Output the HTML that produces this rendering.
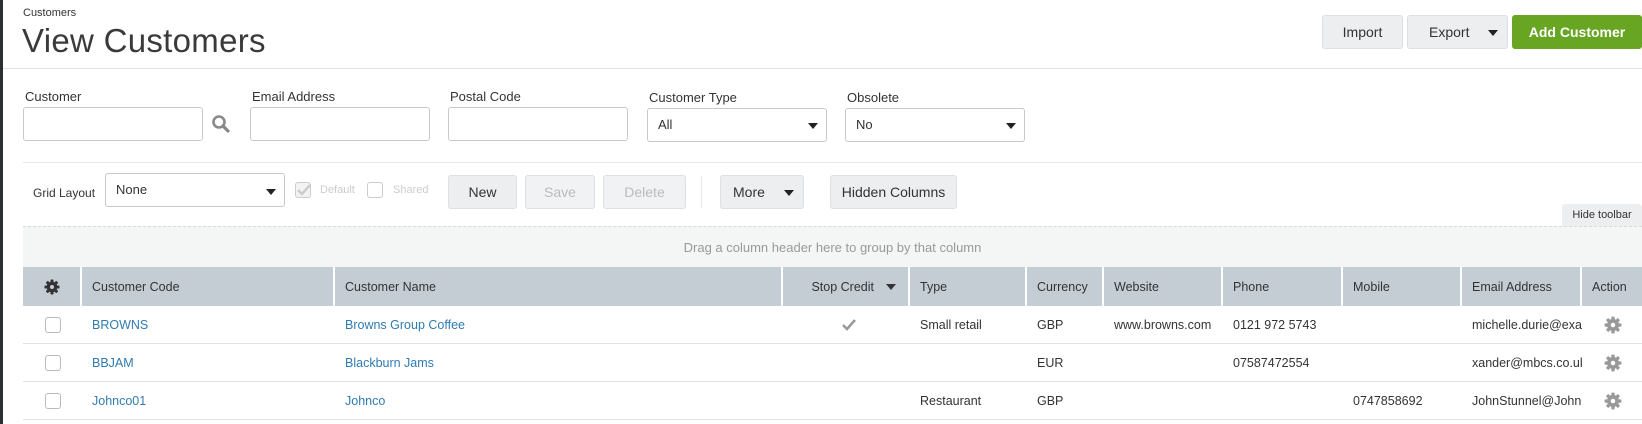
<!DOCTYPE html>
<html><head><style>
*{box-sizing:border-box;margin:0;padding:0}
body{width:1642px;height:424px;overflow:hidden;background:#fff;font-family:"Liberation Sans",sans-serif;color:#333;position:relative;font-size:13px}
.a{position:absolute}
.inp{position:absolute;border:1px solid #c8c8c8;border-radius:3px;background:#fff;height:34px}
.lbl{position:absolute;font-size:13px;color:#333}
.btn{position:absolute;background:#eceef0;border:1px solid #dde0e3;border-radius:3px;height:34px;display:flex;align-items:center;justify-content:center;font-size:14px;color:#333}
.dis{color:#bbb;background:#f1f2f3}
.car{width:0;height:0;border-left:5px solid transparent;border-right:5px solid transparent;border-top:6px solid #222;position:absolute}
.th{position:absolute;top:267px;height:39px;background:#c5cdd4;display:flex;align-items:center;padding-left:10px;font-size:12.5px;color:#333;border-right:2px solid #fff}
.td{position:absolute;height:38px;display:flex;align-items:center;padding-left:10px;font-size:12.5px;white-space:nowrap;overflow:hidden}
.lk{color:#2f7bb0}
.rl{position:absolute;left:23px;width:1619px;height:1px;background:#e2e2e2}
.cb{position:absolute;width:16px;height:16px;border:1px solid #bbb;border-radius:3px;background:#fff}
</style></head><body>
<div class="a" style="left:0;top:0;width:3px;height:424px;background:#2b3034"></div>
<div class="a" style="left:23px;top:7px;font-size:11px">Customers</div>
<div class="a" style="left:22px;top:22px;font-size:33px;color:#3a3a3a;letter-spacing:0.3px">View Customers</div>
<div class="btn" style="left:1322px;top:15px;width:81px">Import</div>
<div class="btn" style="left:1407px;top:15px;width:101px;justify-content:flex-start;padding-left:21px">Export<span class="car" style="left:80px;top:14px"></span></div>
<div class="btn" style="left:1512px;top:15px;width:130px;background:#67a523;border-color:#67a523;color:#fff;font-weight:bold">Add Customer</div>
<div class="a" style="left:3px;top:68px;width:1639px;height:1px;background:#dfe3e6"></div>

<div class="lbl" style="left:25px;top:89px">Customer</div>
<div class="inp" style="left:23px;top:107px;width:180px"></div>
<svg class="a" style="left:211px;top:114px" width="20" height="20" viewBox="0 0 20 20"><circle cx="8" cy="8" r="5.5" fill="none" stroke="#888" stroke-width="2.6"/><path d="M12 12l5 5" stroke="#888" stroke-width="3.2" stroke-linecap="round"/></svg>
<div class="lbl" style="left:252px;top:89px">Email Address</div>
<div class="inp" style="left:250px;top:107px;width:180px"></div>
<div class="lbl" style="left:450px;top:89px">Postal Code</div>
<div class="inp" style="left:448px;top:107px;width:180px"></div>
<div class="lbl" style="left:649px;top:90px">Customer Type</div>
<div class="inp" style="left:647px;top:108px;width:180px;padding:8px 10px;font-size:13px">All<span class="car" style="left:160px;top:14px"></span></div>
<div class="lbl" style="left:847px;top:90px">Obsolete</div>
<div class="inp" style="left:845px;top:108px;width:180px;padding:8px 10px;font-size:13px">No<span class="car" style="left:160px;top:14px"></span></div>
<div class="a" style="left:23px;top:162px;width:1619px;height:1px;background:#e8e8e8"></div>

<div class="lbl" style="left:33px;top:186px;font-size:12px">Grid Layout</div>
<div class="inp" style="left:105px;top:173px;width:180px;padding:8px 10px;font-size:13px">None<span class="car" style="left:160px;top:15px"></span></div>
<div class="cb" style="left:295px;top:182px;border-color:#ccc;background:#f3f3f3"></div>
<svg class="a" style="left:297px;top:184px" width="14" height="12"><path d="M1 6l4 4 8-9" fill="none" stroke="#ccc" stroke-width="2.5"/></svg>
<div class="lbl" style="left:320px;top:184px;font-size:11px;color:#ccc">Default</div>
<div class="cb" style="left:367px;top:182px;border-color:#ccc"></div>
<div class="lbl" style="left:393px;top:184px;font-size:11px;color:#ccc">Shared</div>
<div class="btn" style="left:448px;top:175px;width:69px">New</div>
<div class="btn dis" style="left:525px;top:175px;width:70px">Save</div>
<div class="btn dis" style="left:603px;top:175px;width:83px">Delete</div>
<div class="a" style="left:701px;top:176px;width:1px;height:32px;background:#e6e6e6"></div>
<div class="btn" style="left:720px;top:175px;width:84px;justify-content:flex-start;padding-left:12px">More<span class="car" style="left:63px;top:14px"></span></div>
<div class="btn" style="left:830px;top:175px;width:127px">Hidden Columns</div>
<div class="a" style="left:1562px;top:204px;width:80px;height:22px;background:#eceef0;border-radius:3px 3px 0 0;font-size:11px;display:flex;align-items:center;justify-content:center">Hide toolbar</div>

<div class="a" style="left:23px;top:226px;width:1619px;height:41px;background:#f4f5f5;border-top:1px dashed #d6dadd;display:flex;align-items:center;justify-content:center;color:#999;font-size:13px">Drag a column header here to group by that column</div>

<div class="th" style="left:23px;width:59px;justify-content:center;padding:0"><svg width="16" height="16" viewBox="0 0 16 16"><g fill="#333"><circle cx="8" cy="8" r="5.3"/><rect x="6.5" y="0.5" width="3" height="15" rx="0.8"/><rect x="0.5" y="6.5" width="15" height="3" rx="0.8"/><rect x="6.5" y="0.5" width="3" height="15" rx="0.8" transform="rotate(45 8 8)"/><rect x="6.5" y="0.5" width="3" height="15" rx="0.8" transform="rotate(-45 8 8)"/></g><circle cx="8" cy="8" r="2" fill="#c5cdd4"/></svg></div>
<div class="th" style="left:82px;width:253px">Customer Code</div>
<div class="th" style="left:335px;width:448px">Customer Name</div>
<div class="th" style="left:783px;width:127px;justify-content:flex-end;padding-right:12px">Stop Credit<span class="car" style="position:static;margin-left:12px;border-top-color:#333"></span></div>
<div class="th" style="left:910px;width:117px">Type</div>
<div class="th" style="left:1027px;width:77px">Currency</div>
<div class="th" style="left:1104px;width:119px">Website</div>
<div class="th" style="left:1223px;width:120px">Phone</div>
<div class="th" style="left:1343px;width:119px">Mobile</div>
<div class="th" style="left:1462px;width:120px">Email Address</div>
<div class="th" style="left:1582px;width:60px;border-right:0">Action</div>

<div class="cb" style="left:45px;top:317px"></div>
<div class="td lk" style="left:82px;top:306px">BROWNS</div>
<div class="td lk" style="left:335px;top:306px">Browns Group Coffee</div>
<svg class="a" style="left:842px;top:319px" width="14" height="12"><path d="M1 6l4 4 8-9" fill="none" stroke="#999" stroke-width="2.5"/></svg>
<div class="td" style="left:910px;top:306px">Small retail</div>
<div class="td" style="left:1027px;top:306px">GBP</div>
<div class="td" style="left:1104px;top:306px">www.browns.com</div>
<div class="td" style="left:1223px;top:306px">0121 972 5743</div>
<div class="td" style="left:1462px;top:306px;width:120px">michelle.durie@example.com</div>
<div class="rl" style="top:343px"></div>

<div class="cb" style="left:45px;top:355px"></div>
<div class="td lk" style="left:82px;top:344px">BBJAM</div>
<div class="td lk" style="left:335px;top:344px">Blackburn Jams</div>
<div class="td" style="left:1027px;top:344px">EUR</div>
<div class="td" style="left:1223px;top:344px">07587472554</div>
<div class="td" style="left:1462px;top:344px;width:120px">xander@mbcs.co.uk</div>
<div class="rl" style="top:381px"></div>

<div class="cb" style="left:45px;top:393px"></div>
<div class="td lk" style="left:82px;top:382px">Johnco01</div>
<div class="td lk" style="left:335px;top:382px">Johnco</div>
<div class="td" style="left:910px;top:382px">Restaurant</div>
<div class="td" style="left:1027px;top:382px">GBP</div>
<div class="td" style="left:1343px;top:382px">0747858692</div>
<div class="td" style="left:1462px;top:382px;width:120px">JohnStunnel@JohnCo.com</div>
<div class="rl" style="top:419px"></div>

<svg class="a" style="left:1604px;top:316px" width="18" height="18" viewBox="0 0 16 16"><g fill="#999"><circle cx="8" cy="8" r="5.3"/><rect x="6.5" y="0.5" width="3" height="15" rx="0.8"/><rect x="0.5" y="6.5" width="15" height="3" rx="0.8"/><rect x="6.5" y="0.5" width="3" height="15" rx="0.8" transform="rotate(45 8 8)"/><rect x="6.5" y="0.5" width="3" height="15" rx="0.8" transform="rotate(-45 8 8)"/></g><circle cx="8" cy="8" r="2" fill="#fff"/></svg>
<svg class="a" style="left:1604px;top:354px" width="18" height="18" viewBox="0 0 16 16"><g fill="#999"><circle cx="8" cy="8" r="5.3"/><rect x="6.5" y="0.5" width="3" height="15" rx="0.8"/><rect x="0.5" y="6.5" width="15" height="3" rx="0.8"/><rect x="6.5" y="0.5" width="3" height="15" rx="0.8" transform="rotate(45 8 8)"/><rect x="6.5" y="0.5" width="3" height="15" rx="0.8" transform="rotate(-45 8 8)"/></g><circle cx="8" cy="8" r="2" fill="#fff"/></svg>
<svg class="a" style="left:1604px;top:392px" width="18" height="18" viewBox="0 0 16 16"><g fill="#999"><circle cx="8" cy="8" r="5.3"/><rect x="6.5" y="0.5" width="3" height="15" rx="0.8"/><rect x="0.5" y="6.5" width="15" height="3" rx="0.8"/><rect x="6.5" y="0.5" width="3" height="15" rx="0.8" transform="rotate(45 8 8)"/><rect x="6.5" y="0.5" width="3" height="15" rx="0.8" transform="rotate(-45 8 8)"/></g><circle cx="8" cy="8" r="2" fill="#fff"/></svg>
</body></html>
